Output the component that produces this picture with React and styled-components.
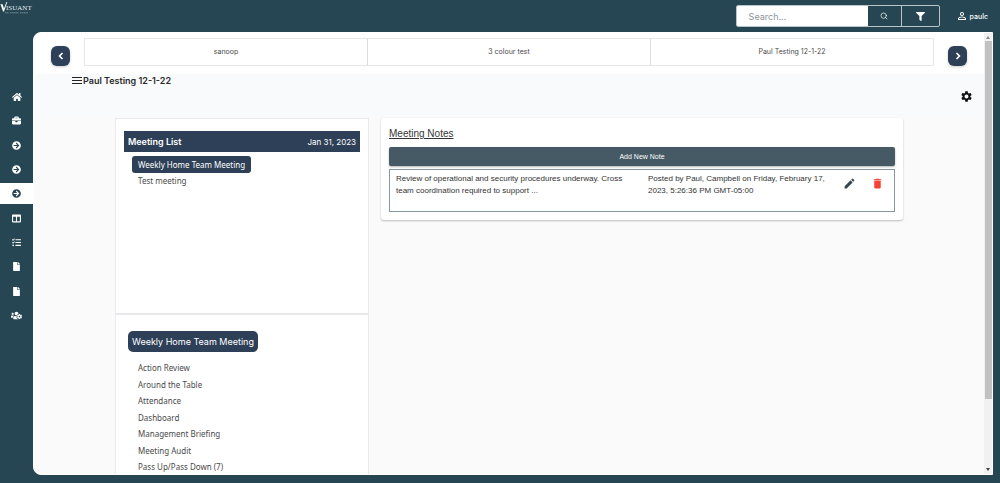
import styled, { createGlobalStyle } from 'styled-components';
import {
    FaHome,
    FaBriefcase,
    FaArrowCircleRight,
    FaColumns,
    FaTasks,
    FaFile,
    FaUsersCog,
    FaFilter,
} from 'react-icons/fa';
import { FiSearch } from 'react-icons/fi';
import { MdPersonOutline, MdSettings, MdEdit, MdDelete } from 'react-icons/md';

const GlobalStyle = createGlobalStyle`
    * {
        box-sizing: border-box;
    }

    body {
        margin: 0;
        background: #264653;
        color: #333;
        font-family: Inter, sans-serif;
        font-size: 8px;
    }

    button, input {
        font-family: inherit;
        font-size: inherit;
        margin: 0;
    }

    button {
        cursor: pointer;
    }

    h1, h2, ul, p {
        margin: 0;
        padding: 0;
    }

    ul {
        list-style: none;
    }
`

const Shell = styled.div`
    display: flex;
    flex-direction: column;
    height: 100vh;
    background: #264653;
`

const TopBar = styled.header`
    display: flex;
    align-items: center;
    height: 32px;
    flex: none;
    padding-right: 12px;
`

const Logo = styled.a`
    display: flex;
    align-self: flex-start;
    margin-right: auto;
    padding-top: 1px;
`

const SearchForm = styled.form`
    display: flex;
    height: 22px;
    border: 1px solid #b9c4c9;
    border-radius: 2px;
    overflow: hidden;

    input {
        width: 131px;
        padding: 0 12px;
        border: none;
        background: #fff;
        font-size: 9px;
        outline: none;
    }

    input::placeholder {
        color: #8d9499;
    }
`

const SearchButton = styled.button`
    display: flex;
    align-items: center;
    justify-content: center;
    width: ${(props) => (props.$wide ? '38px' : '33px')};
    padding: 0;
    border: none;
    border-left: ${(props) => (props.$wide ? '1px solid #b9c4c9' : 'none')};
    background: transparent;
    color: #fff;
`

const UserLink = styled.a`
    display: flex;
    align-items: center;
    gap: 2px;
    margin-left: 16px;
    color: #fff;
    font-size: 7px;
    font-weight: 500;
    text-decoration: none;
`

const Body = styled.div`
    display: flex;
    flex: 1;
    min-height: 0;
    padding: 0 7px 8px 0;
`

const SideNav = styled.nav`
    flex: none;
    width: 33px;
    padding-top: 54px;

    ul {
        display: flex;
        flex-direction: column;
        justify-content: space-between;
        height: 240px;
    }
`

const NavLink = styled.a`
    display: flex;
    align-items: center;
    justify-content: center;
    height: 21px;
    background: ${(props) => (props.$active ? '#fff' : 'transparent')};
    color: ${(props) => (props.$active ? '#264653' : '#fff')};
`

const Panel = styled.div`
    display: flex;
    flex: 1;
    min-width: 0;
    border: 1px solid #fff;
    border-radius: 8px 0 0 8px;
    background: #fafafa;
    overflow: hidden;
`

const Main = styled.main`
    flex: 1;
    min-width: 0;
    overflow: hidden;
    display: flex;
    flex-direction: column;
`

const TabStrip = styled.div`
    display: flex;
    align-items: center;
    gap: 14px;
    flex: none;
    height: 41px;
    padding: 0 17px;
    background: #fff;
`

const ArrowButton = styled.button`
    display: flex;
    align-items: center;
    justify-content: center;
    flex: none;
    width: 19px;
    height: 20px;
    margin-top: 4px;
    padding: 0;
    border: none;
    border-radius: 6px;
    background: #2e4057;
    color: #fff;
    box-shadow: 0 1px 3px rgba(0, 0, 0, .2);
`

const Tabs = styled.div`
    display: flex;
    flex: 1;
    height: 28px;
    margin-bottom: 4px;
    border: 1px solid #e6e6e6;
`

const Tab = styled.button`
    flex: 1;
    padding: 0;
    border: none;
    background: #fff;
    color: #4a4a4a;
    font-size: 7px;

    & + & {
        border-left: 1px solid #dcdcdc;
    }
`

const TitleRow = styled.div`
    display: flex;
    align-items: flex-start;
    justify-content: space-between;
    flex: none;
    height: 44px;
    padding: 0 11px 0 38px;
    background: #f9fafc;

    h1 {
        display: flex;
        align-items: center;
        gap: 1px;
        height: 12px;
        font-size: 9px;
        font-weight: 600;
        color: #2b2b2b;
    }
`

const IconButton = styled.button`
    display: flex;
    align-items: center;
    justify-content: center;
    flex: none;
    width: 14px;
    height: 14px;
    padding: 0;
    border: none;
    background: transparent;
    color: ${(props) => props.$color || '#111'};
`

const SettingsButton = styled(IconButton)`
    margin-top: 15px;
`

const Columns = styled.div`
    display: grid;
    grid-template-columns: minmax(0, 254fr) minmax(0, 522fr);
    align-items: start;
    gap: 12px;
    flex: 1;
    min-height: 0;
    padding: 0 81px;
`

const MeetingColumn = styled.section`
    height: 100%;
    overflow: hidden;
    border: 1px solid #ebebee;
    border-bottom: none;
    background: #fff;
`

const MeetingBlock = styled.div`
    height: 196px;
    padding: 12px 8px;
    border-bottom: 2px solid #e8e8ec;
`

const AgendaBlock = styled.div`
    padding: 16px 12px 0;
`

const ListHeader = styled.div`
    display: flex;
    align-items: center;
    justify-content: space-between;
    height: 21px;
    margin-bottom: 4px;
    padding: 0 4px;
    background: #2e4057;
    color: #fff;

    h2 {
        font-size: 9px;
        font-weight: 600;
    }
`

const MeetingList = styled.ul`
    padding-left: 8px;
`

const AgendaList = styled.ul`
    display: flex;
    flex-direction: column;
    justify-content: space-between;
    height: 115px;
    padding-left: 4px;
`

const MeetingLink = styled.a`
    display: block;
    width: fit-content;
    padding: 0 6px;
    border-radius: 3px;
    background: ${(props) => (props.$active ? '#2e4057' : 'transparent')};
    color: ${(props) => (props.$active ? '#fff' : '#4a4a4a')};
    font-family: "Noto Sans", sans-serif;
    font-size: 8px;
    line-height: ${(props) => (props.$active ? '17px' : '16px')};
    text-decoration: none;
`

const AgendaTitle = styled.h2`
    width: fit-content;
    margin-bottom: 8px;
    padding: 0 4px;
    border-radius: 5px;
    background: #2e4057;
    color: #fff;
    font-size: 9px;
    font-weight: 400;
    line-height: 21px;
`

const NotesCard = styled.section`
    padding: 8px;
    border-radius: 3px;
    background: #fff;
    box-shadow: 0 1px 2px rgba(0, 0, 0, .25);
    font-family: "Liberation Sans", sans-serif;

    h2 {
        margin-bottom: 5px;
        font-size: 10px;
        font-weight: 400;
        line-height: 16px;
        text-decoration: underline;
    }
`

const AddButton = styled.button`
    display: block;
    width: 100%;
    height: 19px;
    margin-bottom: 3px;
    border: none;
    border-radius: 2px;
    background: #455a64;
    color: #fff;
    font-size: 7px;
    box-shadow: 0 1px 2px rgba(0, 0, 0, .3);
`

const Note = styled.article`
    display: grid;
    grid-template-columns: minmax(0, 252fr) minmax(0, 190fr) auto;
    height: 43px;
    padding: 3px 6px;
    border: 1px solid #8797a0;
    font-size: 8px;
    line-height: 12px;

    .text {
        padding-right: 16px;
    }
`

const NoteActions = styled.div`
    display: flex;
    gap: 14px;
    padding: 3px 4px 0 4px;
`

const ScrollTrack = styled.div`
    display: flex;
    flex-direction: column;
    align-items: center;
    flex: none;
    width: 8px;
    padding: 3px 0;
    background: #f1f1f1;

    .thumb {
        width: 7px;
        flex: 356;
        margin-top: 2px;
        background: #c1c1c1;
    }

    .rest {
        flex: 69;
    }
`

const Chevron = ({ d }) => (
    <svg width="8" height="8" viewBox="0 0 8 8" aria-hidden="true">
        <path d={d} fill="none" stroke="currentColor" strokeWidth="1.6" />
    </svg>
);

const navItems = [
    { label: 'Home', icon: FaHome, size: 10 },
    { label: 'Briefcase', icon: FaBriefcase },
    { label: 'Go 1', icon: FaArrowCircleRight },
    { label: 'Go 2', icon: FaArrowCircleRight },
    { label: 'Meetings', icon: FaArrowCircleRight, active: true },
    { label: 'Board', icon: FaColumns },
    { label: 'Tasks', icon: FaTasks },
    { label: 'File 1', icon: FaFile },
    { label: 'File 2', icon: FaFile },
    { label: 'Users', icon: FaUsersCog, size: 11 },
];

const tabs = ['sanoop', '3 colour test', 'Paul Testing 12-1-22'];

const agenda = [
    'Action Review',
    'Around the Table',
    'Attendance',
    'Dashboard',
    'Management Briefing',
    'Meeting Audit',
    'Pass Up/Pass Down (7)',
];

const App = () => {

    const handleSearch = (e) => {
        e.preventDefault();
    };

    return (
        <>
            <GlobalStyle />
            <Shell>
                <TopBar>
                    <Logo href="#" aria-label="Visuant">
                        <svg width="34" height="13" viewBox="0 0 34 13" aria-hidden="true">
                            <path d="M0 3.2h2.6L4 7.6 6.4 1h.9L4 10.6H3L.8 4Z" fill="#fff" />
                            <text x="6" y="9" fill="#e4eaec" fontFamily="Liberation Serif, serif" fontSize="7">ISUANT</text>
                            <path d="M5 11.8h4M10 11.8h9M20 11.8h8" stroke="#8fa2aa" strokeWidth=".8" strokeDasharray="1.4 .4" />
                        </svg>
                    </Logo>
                    <SearchForm onSubmit={handleSearch}>
                        <input type="text" aria-label="Search" placeholder="Search..." />
                        <SearchButton type="submit" aria-label="Search"><FiSearch size={8} /></SearchButton>
                        <SearchButton type="button" aria-label="Filter" $wide><FaFilter size={9} /></SearchButton>
                    </SearchForm>
                    <UserLink href="#"><MdPersonOutline size={12} />paulc</UserLink>
                </TopBar>
                <Body>
                    <SideNav>
                        <ul>
                            {navItems.map(({ label, icon: Icon, active, size }) => (
                                <li key={label}>
                                    <NavLink href="#" aria-label={label} $active={active}><Icon size={size || 9} /></NavLink>
                                </li>
                            ))}
                        </ul>
                    </SideNav>
                    <Panel>
                        <Main>
                            <TabStrip>
                                <ArrowButton aria-label="Previous"><Chevron d="M5.5 1L2.5 4L5.5 7" /></ArrowButton>
                                <Tabs>
                                    {tabs.map((tab) => <Tab key={tab}>{tab}</Tab>)}
                                </Tabs>
                                <ArrowButton aria-label="Next"><Chevron d="M2.5 1L5.5 4L2.5 7" /></ArrowButton>
                            </TabStrip>
                            <TitleRow>
                                <h1>
                                    <svg width="10" height="8" viewBox="0 0 10 8" aria-hidden="true">
                                        <path d="M0 1.5h10M0 4.5h10M0 7.5h10" stroke="#222" strokeWidth="1" />
                                    </svg>
                                    Paul Testing 12-1-22
                                </h1>
                                <SettingsButton aria-label="Settings"><MdSettings size={13} /></SettingsButton>
                            </TitleRow>
                            <Columns>
                                <MeetingColumn>
                                    <MeetingBlock>
                                        <ListHeader>
                                            <h2>Meeting List</h2>
                                            <span>Jan 31, 2023</span>
                                        </ListHeader>
                                        <MeetingList>
                                            <li><MeetingLink href="#" $active>Weekly Home Team Meeting</MeetingLink></li>
                                            <li><MeetingLink href="#">Test meeting</MeetingLink></li>
                                        </MeetingList>
                                    </MeetingBlock>
                                    <AgendaBlock>
                                        <AgendaTitle>Weekly Home Team Meeting</AgendaTitle>
                                        <AgendaList>
                                            {agenda.map((item) => (
                                                <li key={item}><MeetingLink href="#">{item}</MeetingLink></li>
                                            ))}
                                        </AgendaList>
                                    </AgendaBlock>
                                </MeetingColumn>
                                <NotesCard>
                                    <h2>Meeting Notes</h2>
                                    <AddButton>Add New Note</AddButton>
                                    <Note>
                                        <p className="text">Review of operational and security procedures underway. Cross team coordination required to support ...</p>
                                        <p>Posted by Paul, Campbell on Friday, February 17, 2023, 5:26:36 PM GMT-05:00</p>
                                        <NoteActions>
                                            <IconButton aria-label="Edit note" $color="#37474f"><MdEdit size={13} /></IconButton>
                                            <IconButton aria-label="Delete note" $color="#f44336"><MdDelete size={13} /></IconButton>
                                        </NoteActions>
                                    </Note>
                                </NotesCard>
                            </Columns>
                        </Main>
                        <ScrollTrack aria-hidden="true">
                            <svg width="4" height="3" viewBox="0 0 4 3"><path d="M0 3l2-3 2 3z" fill="#8a8a8a" /></svg>
                            <div className="thumb" />
                            <div className="rest" />
                            <svg width="4" height="3" viewBox="0 0 4 3"><path d="M0 0l2 3 2-3z" fill="#444" /></svg>
                        </ScrollTrack>
                    </Panel>
                </Body>
            </Shell>
        </>
    );
};

export default App;
